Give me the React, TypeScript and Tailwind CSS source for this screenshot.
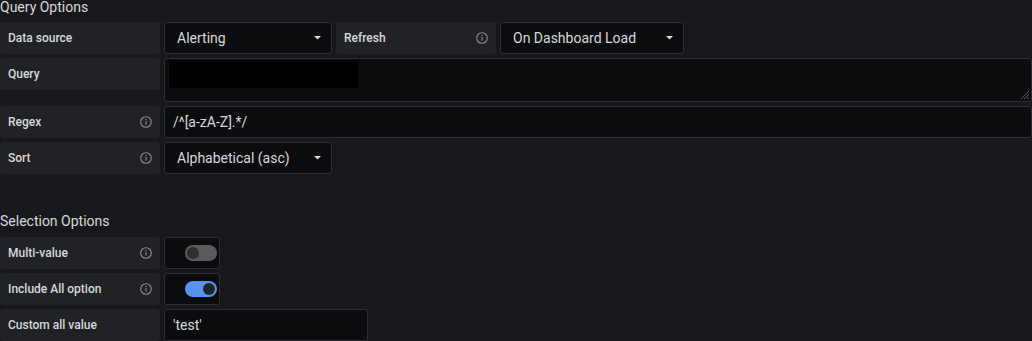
import React from "react";

const font = { fontFamily: "Roboto, 'Noto Sans', sans-serif" };

function Info() {
  return (
    <svg width="12" height="12" viewBox="0 0 12 12" className="shrink-0">
      <circle cx="6" cy="6" r="5.3" fill="none" stroke="#8e8e8e" strokeWidth="1.1" />
      <rect x="5.45" y="5" width="1.1" height="3.6" fill="#8e8e8e" />
      <rect x="5.45" y="3" width="1.1" height="1.1" fill="#8e8e8e" />
    </svg>
  );
}

function Caret() {
  return (
    <svg width="7" height="4" viewBox="0 0 7 4" className="shrink-0">
      <path d="M0 0 L7 0 L3.5 3.5 Z" fill="#d8d9da" />
    </svg>
  );
}

function Label({ text, info, w = "w-[160px]" }: { text: string; info?: boolean; w?: string }) {
  return (
    <div className={`${w} h-[32px] shrink-0 rounded-[3px] bg-[#202226] flex items-center justify-between pl-[8px] pr-[8px] text-[12px] font-medium text-[#d8d9da]`}>
      <span>{text}</span>
      {info ? <Info /> : null}
    </div>
  );
}

function Select({ text, w }: { text: string; w: string }) {
  return (
    <div className={`${w} h-[32px] shrink-0 rounded-[3px] bg-[#0b0c0e] border border-[#2c2e33] flex items-center justify-between pl-[12px] pr-[10px] text-[14px] text-[#d8d9da]`}>
      <span>{text}</span>
      <Caret />
    </div>
  );
}

function Switch({ on }: { on: boolean }) {
  return (
    <div className="w-[56px] h-[32px] shrink-0 rounded-[3px] bg-[#0b0c0e] border border-[#2c2e33] flex items-center justify-end pr-[2px]">
      <div className={`w-[32px] h-[16px] rounded-full flex items-center px-[2px] ${on ? "bg-[#5794f2] justify-end" : "bg-[#5a5a5a] justify-start"}`}>
        <div className={`w-[12px] h-[12px] rounded-full ${on ? "bg-[#222326]" : "bg-[#2e2f31]"}`} />
      </div>
    </div>
  );
}

export default function App() {
  return (
    <div className="w-[1032px] h-[341px] overflow-hidden bg-[#17181b] text-[#d8d9da]" style={font}>
      <div className="h-[22px] leading-[14px] text-[14px] text-[#d8d9da]">Query Options</div>
      <div className="flex flex-col gap-[4px]">
        <div className="flex gap-[4px]">
          <Label text="Data source" />
          <Select text="Alerting" w="w-[168px]" />
          <Label text="Refresh" info />
          <Select text="On Dashboard Load" w="w-[184px]" />
        </div>
        <div className="flex gap-[4px]">
          <Label text="Query" />
          <div className="relative flex-1 h-[44px] rounded-[3px] bg-[#0b0c0e] border border-[#2c2e33]">
            <div className="absolute left-[4px] top-[1px] w-[189px] h-[28px] bg-black" />
            <svg className="absolute right-[1px] bottom-[1px]" width="10" height="10" viewBox="0 0 10 10">
              <path d="M9 1 L1 9 M9 4 L4 9 M9 7 L7 9" stroke="#5a5c60" strokeWidth="1" />
            </svg>
          </div>
        </div>
        <div className="flex gap-[4px]">
          <Label text="Regex" info />
          <div className="flex-1 h-[32px] rounded-[3px] bg-[#0b0c0e] border border-[#2c2e33] flex items-center pl-[8px] text-[14px] text-[#d8d9da]">
            /^[a-zA-Z].*/
          </div>
        </div>
        <div className="flex gap-[4px]">
          <Label text="Sort" info />
          <Select text="Alphabetical (asc)" w="w-[168px]" />
        </div>
      </div>
      <div className="mt-[40px] h-[23px] leading-[14px] text-[14px] text-[#d8d9da]">Selection Options</div>
      <div className="flex flex-col gap-[4px]">
        <div className="flex gap-[4px]">
          <Label text="Multi-value" info />
          <Switch on={false} />
        </div>
        <div className="flex gap-[4px]">
          <Label text="Include All option" info />
          <Switch on={true} />
        </div>
        <div className="flex gap-[4px]">
          <Label text="Custom all value" />
          <div className="w-[204px] h-[32px] rounded-[3px] bg-[#0b0c0e] border border-[#2c2e33] flex items-center pl-[8px] text-[14px] text-[#d8d9da]">
            'test'
          </div>
        </div>
      </div>
    </div>
  );
}
